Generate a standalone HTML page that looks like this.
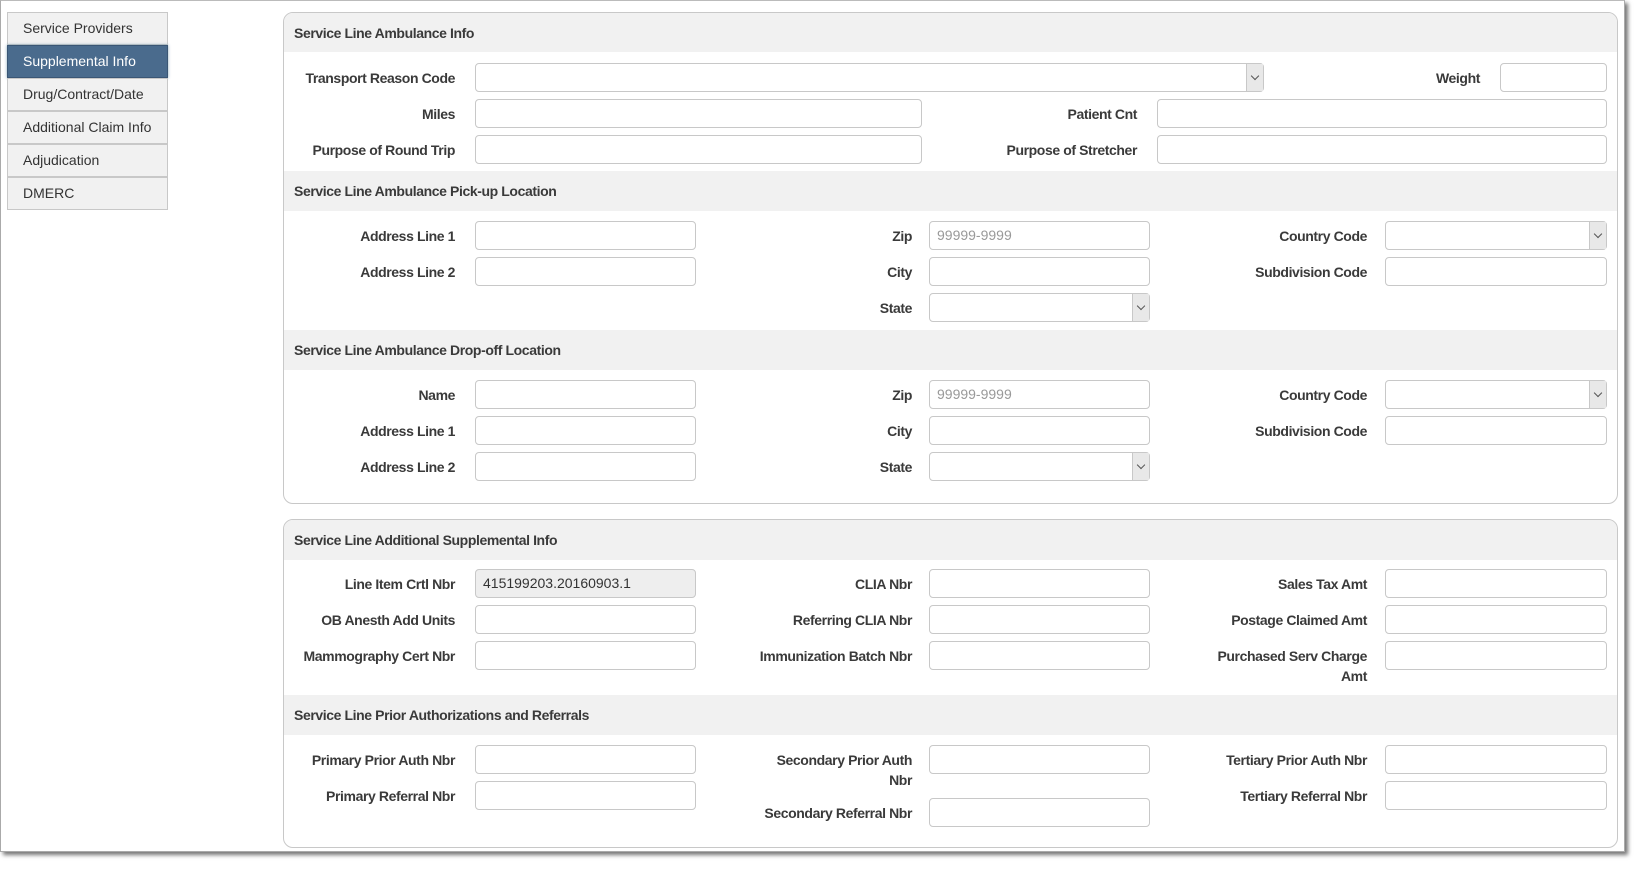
<!DOCTYPE html>
<html><head><meta charset="utf-8"><style>
*{box-sizing:border-box;margin:0;padding:0}
body{width:1637px;height:870px;background:#fff;position:relative;overflow:hidden;font-family:"Liberation Sans",Arial,sans-serif;color:#333}
.frame{position:absolute;left:0;top:0;width:1625px;height:852px;border:1px solid #aaa;border-top:1px solid #bbb;box-shadow:3px 3px 4px #777}
.tab{position:absolute;left:7px;width:161px;height:33px;background:#f1f1f1;border:1px solid #c8c8c8;font-size:14px;line-height:31px;padding-left:15px;color:#333}
.tab.act{background:#4a6b8d;color:#fff;border-color:#3a5675;box-shadow:0 0 3px #8ab}
.panel{position:absolute;left:283px;width:1335px;border:1px solid #c8c8c8;border-radius:10px;overflow:hidden;background:#fff}
.hd{position:absolute;left:0;width:100%;height:40px;background:#f1f1f1;font-weight:bold;font-size:14px;line-height:40px;padding-left:10px;color:#3a3a3a;letter-spacing:-0.4px}
.l{position:absolute;font-weight:bold;font-size:14px;text-align:right;width:240px;color:#3a3a3a;letter-spacing:-0.4px;line-height:20px}
.i{position:absolute;height:29px;border:1px solid #c8c8c8;border-radius:4px;background:#fff;font-size:14px;line-height:27px;padding-left:7px;color:#999}
.i.ro{background:#eee;color:#333}
.s::after{content:"";position:absolute;right:0;top:0;width:16px;height:27px;background:#e8e8e8;border-left:1px solid #c8c8c8}
.s::before{content:"";position:absolute;right:5px;top:9px;width:5px;height:5px;border-right:1px solid #555;border-bottom:1px solid #555;transform:rotate(45deg);z-index:2}
</style></head><body>
<div class="frame"></div>
<div class="tab" style="top:12px">Service Providers</div>
<div class="tab act" style="top:45px">Supplemental Info</div>
<div class="tab" style="top:78px">Drug/Contract/Date</div>
<div class="tab" style="top:111px">Additional Claim Info</div>
<div class="tab" style="top:144px">Adjudication</div>
<div class="tab" style="top:177px">DMERC</div>

<div class="panel" style="top:12px;height:492px"></div>
<div class="panel" style="top:519px;height:329px"></div>

<div class="hd" style="position:absolute;left:284px;width:1333px;top:13px;height:39px;border-radius:9px 9px 0 0">Service Line Ambulance Info</div>
<div class="l" style="left:215px;top:68px">Transport Reason Code</div>
<div class="i s" style="left:475px;top:63px;width:789px"></div>
<div class="l" style="left:1240px;top:68px">Weight</div>
<div class="i" style="left:1500px;top:63px;width:107px"></div>
<div class="l" style="left:215px;top:104px">Miles</div>
<div class="i" style="left:475px;top:99px;width:447px"></div>
<div class="l" style="left:897px;top:104px">Patient Cnt</div>
<div class="i" style="left:1157px;top:99px;width:450px"></div>
<div class="l" style="left:215px;top:140px">Purpose of Round Trip</div>
<div class="i" style="left:475px;top:135px;width:447px"></div>
<div class="l" style="left:897px;top:140px">Purpose of Stretcher</div>
<div class="i" style="left:1157px;top:135px;width:450px"></div>

<div class="hd" style="left:284px;width:1333px;top:171px">Service Line Ambulance Pick-up Location</div>
<div class="l" style="left:215px;top:226px">Address Line 1</div>
<div class="i" style="left:475px;top:221px;width:221px"></div>
<div class="l" style="left:672px;top:226px">Zip</div>
<div class="i" style="left:929px;top:221px;width:221px">99999-9999</div>
<div class="l" style="left:1127px;top:226px">Country Code</div>
<div class="i s" style="left:1385px;top:221px;width:222px"></div>
<div class="l" style="left:215px;top:262px">Address Line 2</div>
<div class="i" style="left:475px;top:257px;width:221px"></div>
<div class="l" style="left:672px;top:262px">City</div>
<div class="i" style="left:929px;top:257px;width:221px"></div>
<div class="l" style="left:1127px;top:262px">Subdivision Code</div>
<div class="i" style="left:1385px;top:257px;width:222px"></div>
<div class="l" style="left:672px;top:298px">State</div>
<div class="i s" style="left:929px;top:293px;width:221px"></div>

<div class="hd" style="left:284px;width:1333px;top:330px">Service Line Ambulance Drop-off Location</div>
<div class="l" style="left:215px;top:385px">Name</div>
<div class="i" style="left:475px;top:380px;width:221px"></div>
<div class="l" style="left:672px;top:385px">Zip</div>
<div class="i" style="left:929px;top:380px;width:221px">99999-9999</div>
<div class="l" style="left:1127px;top:385px">Country Code</div>
<div class="i s" style="left:1385px;top:380px;width:222px"></div>
<div class="l" style="left:215px;top:421px">Address Line 1</div>
<div class="i" style="left:475px;top:416px;width:221px"></div>
<div class="l" style="left:672px;top:421px">City</div>
<div class="i" style="left:929px;top:416px;width:221px"></div>
<div class="l" style="left:1127px;top:421px">Subdivision Code</div>
<div class="i" style="left:1385px;top:416px;width:222px"></div>
<div class="l" style="left:215px;top:457px">Address Line 2</div>
<div class="i" style="left:475px;top:452px;width:221px"></div>
<div class="l" style="left:672px;top:457px">State</div>
<div class="i s" style="left:929px;top:452px;width:221px"></div>

<div class="hd" style="left:284px;width:1333px;top:520px;border-radius:9px 9px 0 0">Service Line Additional Supplemental Info</div>
<div class="l" style="left:215px;top:574px">Line Item Crtl Nbr</div>
<div class="i ro" style="left:475px;top:569px;width:221px">415199203.20160903.1</div>
<div class="l" style="left:672px;top:574px">CLIA Nbr</div>
<div class="i" style="left:929px;top:569px;width:221px"></div>
<div class="l" style="left:1127px;top:574px">Sales Tax Amt</div>
<div class="i" style="left:1385px;top:569px;width:222px"></div>
<div class="l" style="left:215px;top:610px">OB Anesth Add Units</div>
<div class="i" style="left:475px;top:605px;width:221px"></div>
<div class="l" style="left:672px;top:610px">Referring CLIA Nbr</div>
<div class="i" style="left:929px;top:605px;width:221px"></div>
<div class="l" style="left:1127px;top:610px">Postage Claimed Amt</div>
<div class="i" style="left:1385px;top:605px;width:222px"></div>
<div class="l" style="left:215px;top:646px">Mammography Cert Nbr</div>
<div class="i" style="left:475px;top:641px;width:221px"></div>
<div class="l" style="left:672px;top:646px">Immunization Batch Nbr</div>
<div class="i" style="left:929px;top:641px;width:221px"></div>
<div class="l" style="left:1127px;top:646px">Purchased Serv Charge<br>Amt</div>
<div class="i" style="left:1385px;top:641px;width:222px"></div>

<div class="hd" style="left:284px;width:1333px;top:695px">Service Line Prior Authorizations and Referrals</div>
<div class="l" style="left:215px;top:750px">Primary Prior Auth Nbr</div>
<div class="i" style="left:475px;top:745px;width:221px"></div>
<div class="l" style="left:672px;top:750px">Secondary Prior Auth<br>Nbr</div>
<div class="i" style="left:929px;top:745px;width:221px"></div>
<div class="l" style="left:1127px;top:750px">Tertiary Prior Auth Nbr</div>
<div class="i" style="left:1385px;top:745px;width:222px"></div>
<div class="l" style="left:215px;top:786px">Primary Referral Nbr</div>
<div class="i" style="left:475px;top:781px;width:221px"></div>
<div class="l" style="left:1127px;top:786px">Tertiary Referral Nbr</div>
<div class="i" style="left:1385px;top:781px;width:222px"></div>
<div class="l" style="left:672px;top:803px">Secondary Referral Nbr</div>
<div class="i" style="left:929px;top:798px;width:221px"></div>
</body></html>
